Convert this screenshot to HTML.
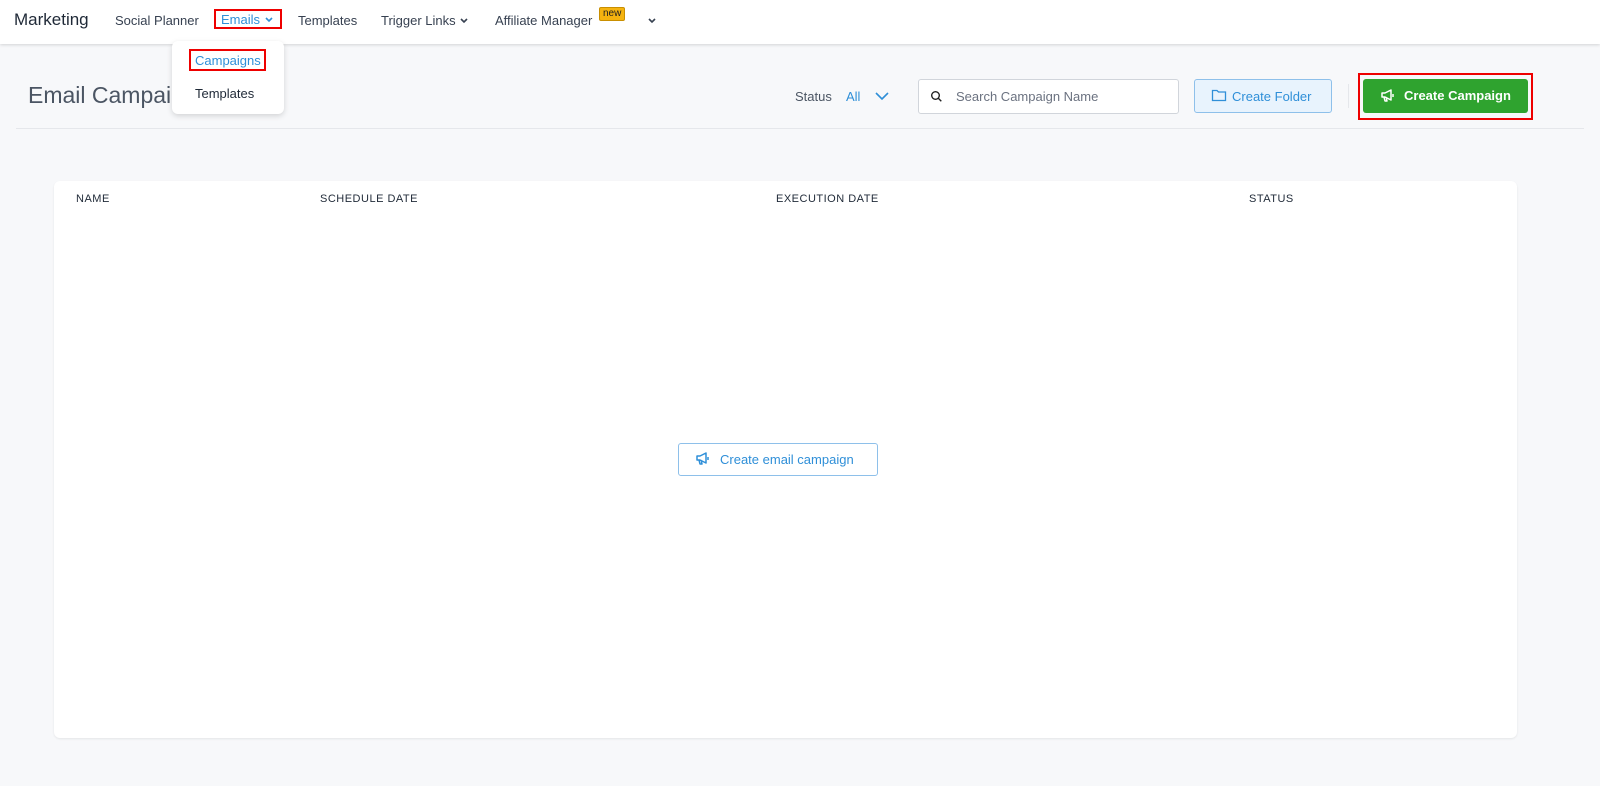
<!DOCTYPE html>
<html><head><meta charset="utf-8"><style>
*{box-sizing:border-box;margin:0;padding:0}
body{width:1600px;height:786px;background:#f7f8fa;font-family:"Liberation Sans",Arial,sans-serif;position:relative;overflow:hidden;color:#374151}
.nav{position:absolute;left:0;top:0;width:1600px;height:44px;background:#fff;box-shadow:0 1px 3px rgba(0,0,0,.15)}
.abs{position:absolute;white-space:nowrap}
.red{position:absolute;border:2px solid #e00}
.card{position:absolute;left:54px;top:181px;width:1463px;height:557px;background:#fff;border-radius:6px;box-shadow:0 1px 2px rgba(0,0,0,.08)}
.th{position:absolute;top:193px;font-size:11px;letter-spacing:.5px;color:#1f2937}
</style></head><body>
<div class="nav"></div>
<div class="abs" style="left:14px;top:10px;font-size:17px;color:#1f2937">Marketing</div>
<div class="abs" style="left:115px;top:13px;font-size:13px;color:#374151">Social Planner</div>
<div class="abs" style="left:221px;top:12px;font-size:13px;color:#2f8fd8">Emails <svg width="10" height="8" viewBox="0 0 10 8"><path d="M2 2l3 3 3-3" fill="none" stroke="#2f8fd8" stroke-width="1.6"/></svg></div>
<div class="red" style="left:214px;top:9px;width:68px;height:20px"></div>
<div class="abs" style="left:298px;top:13px;font-size:13px">Templates</div>
<div class="abs" style="left:381px;top:13px;font-size:13px">Trigger Links <svg width="10" height="8" viewBox="0 0 10 8"><path d="M2 2l3 3 3-3" fill="none" stroke="#374151" stroke-width="1.6"/></svg></div>
<div class="abs" style="left:495px;top:13px;font-size:13px">Affiliate Manager</div>
<div class="abs" style="left:599px;top:7px;background:#f5b30f;border:1px solid #c98f00;border-radius:2px;font-size:10px;padding:0 3px;line-height:12px;color:#222">new</div>
<svg class="abs" style="left:647px;top:17px" width="10" height="8" viewBox="0 0 10 8"><path d="M2 2l3 3 3-3" fill="none" stroke="#374151" stroke-width="1.6"/></svg>

<div class="abs" style="left:28px;top:82px;font-size:23px;color:#4b5563;font-weight:300">Email Campaigns</div>
<div class="abs" style="left:172px;top:41px;width:112px;height:73px;background:#fff;border-radius:6px;box-shadow:0 2px 6px rgba(0,0,0,.15)"></div>
<div class="abs" style="left:195px;top:53px;font-size:13px;color:#2f8fd8">Campaigns</div>
<div class="red" style="left:189px;top:49px;width:77px;height:22px"></div>
<div class="abs" style="left:195px;top:86px;font-size:13px;color:#1f2937">Templates</div>

<div class="abs" style="left:795px;top:89px;font-size:13px;color:#4b5563">Status</div>
<div class="abs" style="left:846px;top:89px;font-size:13px;color:#2f8fd8">All</div>
<svg class="abs" style="left:874px;top:90px" width="16" height="12" viewBox="0 0 16 12"><path d="M2 3l6 6 6-6" fill="none" stroke="#2f8fd8" stroke-width="1.6"/></svg>
<div class="abs" style="left:918px;top:79px;width:261px;height:35px;background:#fff;border:1px solid #d1d5db;border-radius:3px"></div>
<svg class="abs" style="left:930px;top:90px" width="13" height="13" viewBox="0 0 13 13"><circle cx="5.5" cy="5.5" r="3.8" fill="none" stroke="#222" stroke-width="1.4"/><path d="M8.3 8.3l3 3" stroke="#222" stroke-width="1.4"/></svg>
<div class="abs" style="left:956px;top:89px;font-size:13px;color:#6b7280">Search Campaign Name</div>
<div class="abs" style="left:1194px;top:79px;width:138px;height:34px;background:#e8f3fd;border:1px solid #8ec0ea;border-radius:3px"></div>
<svg class="abs" style="left:1211px;top:88px" width="16" height="14" viewBox="0 0 16 14"><path d="M1.5 2.5h4.5l1.5 1.5h7v8.5h-13z" fill="none" stroke="#2f8fd8" stroke-width="1.3"/></svg>
<div class="abs" style="left:1232px;top:89px;font-size:13px;color:#2f8fd8">Create Folder</div>
<div class="abs" style="left:1348px;top:84px;width:1px;height:24px;background:#e5e7eb"></div>
<div class="red" style="left:1358px;top:73px;width:175px;height:47px"></div>
<div class="abs" style="left:1363px;top:79px;width:165px;height:34px;background:#2fa32f;border-radius:3px"></div>
<svg class="abs" style="left:1380px;top:88px" width="16" height="15" viewBox="0 0 16 15"><path d="M2 5h3l6-3v10l-6-3H2z M4 9l1 4h2l-1-4 M13 6v3" fill="none" stroke="#fff" stroke-width="1.5" stroke-linejoin="round"/></svg>
<div class="abs" style="left:1404px;top:88px;font-size:13px;color:#fff;font-weight:bold">Create Campaign</div>
<div class="abs" style="left:16px;top:128px;width:1568px;height:1px;background:#e5e7eb"></div>

<div class="card"></div>
<div class="th" style="left:76px">NAME</div>
<div class="th" style="left:320px">SCHEDULE DATE</div>
<div class="th" style="left:776px">EXECUTION DATE</div>
<div class="th" style="left:1249px">STATUS</div>
<div class="abs" style="left:678px;top:443px;width:200px;height:33px;border:1px solid #8ec0ea;border-radius:3px;background:#fff"></div>
<svg class="abs" style="left:695px;top:451px" width="16" height="15" viewBox="0 0 16 15"><path d="M2 5h3l6-3v10l-6-3H2z M4 9l1 4h2l-1-4 M13 6v3" fill="none" stroke="#2f8fd8" stroke-width="1.5" stroke-linejoin="round"/></svg>
<div class="abs" style="left:720px;top:452px;font-size:13px;color:#2f8fd8">Create email campaign</div>
</body></html>
